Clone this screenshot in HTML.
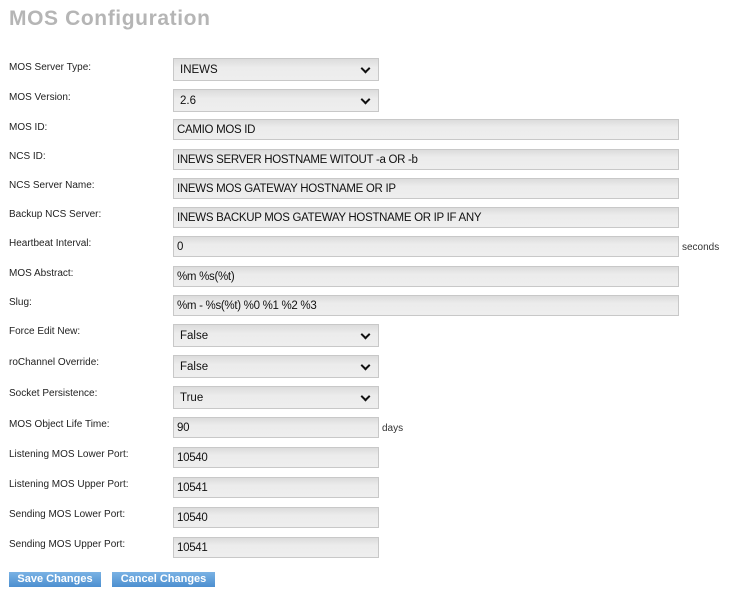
<!DOCTYPE html>
<html><head><style>
body{margin:0;width:740px;height:596px;background:#fff;font-family:"Liberation Sans",sans-serif;position:relative;overflow:hidden}
.t{position:absolute;left:9px;top:7px;font-size:21px;font-weight:bold;color:#b5b5b5;letter-spacing:0.6px}
.l{position:absolute;left:9px;font-size:10px;color:#222}
.f{position:absolute;left:173px;box-sizing:border-box;border:1px solid #c8c8c8;background:linear-gradient(#dcdcdc,#ececec 40%,#eeeeee);font-size:11.5px;color:#111;padding-left:3px;padding-top:1px;line-height:19px;height:21px;letter-spacing:-0.3px}
.s{width:206px;height:23px;line-height:21px;padding-left:6px;letter-spacing:0}
.s:after{content:"";position:absolute;right:9px;top:6px;width:5px;height:5px;border-right:2px solid #111;border-bottom:2px solid #111;transform:rotate(45deg)}
.w{width:506px}.n{width:206px}
.u{position:absolute;font-size:10px;color:#333}
.b{position:absolute;top:572px;height:15px;background:linear-gradient(#7ab2e4,#4c8fd0);color:#fff;font-weight:bold;font-size:11px;text-align:center;line-height:15px}
</style></head><body>
<div class="t">MOS Configuration</div>
<div class="l" style="top:62px">MOS Server Type:</div><div class="f s" style="top:58px">INEWS</div>
<div class="l" style="top:92px">MOS Version:</div><div class="f s" style="top:89px">2.6</div>
<div class="l" style="top:122px">MOS ID:</div><div class="f w" style="top:119px">CAMIO MOS ID</div>
<div class="l" style="top:151px">NCS ID:</div><div class="f w" style="top:149px">INEWS SERVER HOSTNAME WITOUT -a OR -b</div>
<div class="l" style="top:180px">NCS Server Name:</div><div class="f w" style="top:178px">INEWS MOS GATEWAY HOSTNAME OR IP</div>
<div class="l" style="top:209px">Backup NCS Server:</div><div class="f w" style="top:207px">INEWS BACKUP MOS GATEWAY HOSTNAME OR IP IF ANY</div>
<div class="l" style="top:238px">Heartbeat Interval:</div><div class="f w" style="top:236px">0</div><div class="u" style="left:682px;top:242px">seconds</div>
<div class="l" style="top:268px">MOS Abstract:</div><div class="f w" style="top:266px">%m %s(%t)</div>
<div class="l" style="top:297px">Slug:</div><div class="f w" style="top:295px">%m - %s(%t) %0 %1 %2 %3</div>
<div class="l" style="top:326px">Force Edit New:</div><div class="f s" style="top:324px">False</div>
<div class="l" style="top:357px">roChannel Override:</div><div class="f s" style="top:355px">False</div>
<div class="l" style="top:388px">Socket Persistence:</div><div class="f s" style="top:386px">True</div>
<div class="l" style="top:419px">MOS Object Life Time:</div><div class="f n" style="top:417px">90</div><div class="u" style="left:382px;top:423px">days</div>
<div class="l" style="top:449px">Listening MOS Lower Port:</div><div class="f n" style="top:447px">10540</div>
<div class="l" style="top:479px">Listening MOS Upper Port:</div><div class="f n" style="top:477px">10541</div>
<div class="l" style="top:509px">Sending MOS Lower Port:</div><div class="f n" style="top:507px">10540</div>
<div class="l" style="top:539px">Sending MOS Upper Port:</div><div class="f n" style="top:537px">10541</div>
<div class="b" style="left:9px;width:92px">Save Changes</div>
<div class="b" style="left:112px;width:103px">Cancel Changes</div>
</body></html>
